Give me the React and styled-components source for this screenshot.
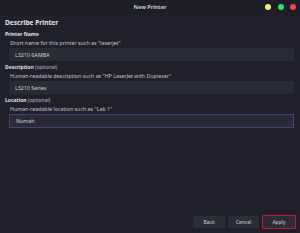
import React from "react";
import styled, { createGlobalStyle } from "styled-components";

const GlobalStyle = createGlobalStyle`
  html, body {
    margin: 0;
    padding: 0;
    background: #1e1f2a;
  }
  #root {
    width: 300px;
    height: 233px;
  }
`;

const Window = styled.div`
  width: 300px;
  height: 233px;
  display: flex;
  flex-direction: column;
  background: #1f202b;
  font-family: "Noto Sans", "Open Sans", sans-serif;
  color: #d6d6dc;
  overflow: hidden;
`;

const TitleBar = styled.div`
  height: 14px;
  display: flex;
  align-items: center;
  justify-content: center;
  position: relative;
  background: #1d1e28;
`;

const Title = styled.span`
  font-size: 5.5px;
  font-weight: 700;
  color: #c8c8d0;
`;

const Dots = styled.div`
  position: absolute;
  right: 4px;
  top: 4px;
  display: flex;
  gap: 6.5px;
`;

const Dot = styled.span`
  width: 6px;
  height: 6px;
  border-radius: 50%;
  background: ${(p) => p.color};
`;

const Body = styled.div`
  flex: 1;
  display: flex;
  flex-direction: column;
  padding: 4px 6px 0 5px;
`;

const Heading = styled.h1`
  margin: 0 0 2px 0;
  font-size: 6.6px;
  font-weight: 700;
  color: #e2e2e8;
  line-height: 10px;
`;

const Field = styled.div`
  display: flex;
  flex-direction: column;
  margin-bottom: 1.5px;
`;

const Label = styled.div`
  font-size: 5px;
  font-weight: 700;
  line-height: 9px;
  color: #e0e0e6;
`;

const Optional = styled.span`
  font-weight: 400;
  color: #b8b8c0;
`;

const Help = styled.div`
  font-size: 5.3px;
  line-height: 8px;
  padding-left: 5px;
  color: #c4c4cc;
  margin-bottom: 1.3px;
`;

const Input = styled.div`
  margin-left: 4px;
  height: ${(p) => (p.focused ? "12px" : "13px")};
  display: flex;
  align-items: center;
  padding-left: 6px;
  font-size: 5.3px;
  color: #d0d0d8;
  background: #292b37;
  border: ${(p) => (p.focused ? "1px solid #4a3d78" : "0")};
`;

const Footer = styled.div`
  display: flex;
  justify-content: flex-end;
  gap: 3px;
  padding: 0 4px 4px 0;
`;

const Button = styled.button`
  height: ${(p) => (p.highlighted ? "14px" : "12px")};
  width: ${(p) => p.w}px;
  margin-top: ${(p) => (p.highlighted ? "0" : "1px")};
  padding: 0;
  font-family: inherit;
  font-size: 5px;
  color: #d0d0d8;
  background: #2b2d39;
  border: ${(p) => (p.highlighted ? "1px solid #d2142c" : "0")};
  border-radius: 1px;
`;

export default function App() {
  return (
    <>
      <GlobalStyle />
      <Window>
        <TitleBar>
          <Title>New Printer</Title>
          <Dots>
            <Dot color="#f1ee6a" />
            <Dot color="#2fe36a" />
            <Dot color="#f24848" />
          </Dots>
        </TitleBar>
        <Body>
          <Heading>Describe Printer</Heading>
          <Field>
            <Label>Printer Name</Label>
            <Help>Short name for this printer such as "laserjet"</Help>
            <Input>L3210-SAMBA</Input>
          </Field>
          <Field>
            <Label>
              Description <Optional>(optional)</Optional>
            </Label>
            <Help>Human-readable description such as "HP LaserJet with Duplexer"</Help>
            <Input>L3210 Series</Input>
          </Field>
          <Field>
            <Label>
              Location <Optional>(optional)</Optional>
            </Label>
            <Help>Human-readable location such as "Lab 1"</Help>
            <Input focused>Numah</Input>
          </Field>
        </Body>
        <Footer>
          <Button w={32}>Back</Button>
          <Button w={31}>Cancel</Button>
          <Button w={34} highlighted>
            Apply
          </Button>
        </Footer>
      </Window>
    </>
  );
}
